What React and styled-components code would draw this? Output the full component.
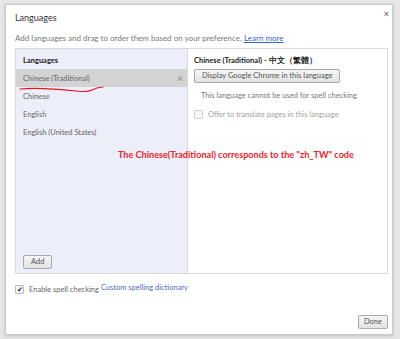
import React from "react";
import styled, { createGlobalStyle } from "styled-components";

const GlobalStyle = createGlobalStyle`
  body {
    margin: 0;
    background: #e6e6e6;
    font-family: Lato, "Open Sans", sans-serif;
  }
`;

const Screen = styled.div`
  width: 400px;
  height: 339px;
  padding: 4px 7px 4px 5px;
  box-sizing: border-box;
`;

const Dialog = styled.div`
  position: relative;
  height: 100%;
  background: #fff;
  border: 1px solid #c9c9c9;
  box-shadow: 0 1px 3px rgba(0, 0, 0, 0.18);
  box-sizing: border-box;
  padding: 7px 4px 5px 9px;
  display: flex;
  flex-direction: column;
`;

const Title = styled.div`
  font-size: 9px;
  color: #333;
  line-height: 12px;
  height: 12px;
`;

const Close = styled.div`
  position: absolute;
  top: 3px;
  right: 3px;
  font-size: 9px;
  color: #777;
  font-weight: bold;
`;

const Subtitle = styled.div`
  margin-top: 9px;
  font-size: 8px;
  color: #777;
  line-height: 10px;
  a {
    color: #3366cc;
    text-decoration: underline;
  }
`;

const Panels = styled.div`
  position: relative;
  margin-top: 5px;
  height: 226px;
  display: flex;
  border: 1px solid #dadada;
  box-sizing: border-box;
`;

const ListCol = styled.div`
  position: relative;
  width: 171px;
  background: #eceef9;
  border-right: 1px solid #dadada;
  display: flex;
  flex-direction: column;
`;

const Heading = styled.div`
  font-size: 7.5px;
  font-weight: bold;
  color: #222;
  padding: 7px ${(p) => (p.$flush ? "0" : "7px")} 0;
  height: 15px;
  box-sizing: border-box;
`;

const Row = styled.div`
  height: 18px;
  margin-top: ${(p) => (p.$first ? "5px" : "0")};
  display: flex;
  align-items: center;
  justify-content: space-between;
  padding: 0 4px 0 7px;
  font-size: 7.5px;
  color: #666;
  background: ${(p) => (p.$selected ? "#d3d3d3" : "transparent")};
`;

const RowX = styled.span`
  font-size: 10px;
  color: #888;
`;

const Spacer = styled.div`
  flex: 1;
`;

const SmallButton = styled.button`
  font-family: inherit;
  font-size: 7.5px;
  color: #555;
  background: linear-gradient(#f6f6f6, #e2e2e2);
  border: 1px solid #aaa;
  border-radius: 2px;
  height: 14px;
  padding: 0 ${(p) => p.$pad || "7px"};
  line-height: 12px;
  align-self: ${(p) => p.$align || "flex-start"};
  margin: ${(p) => p.$margin || "0"};
`;

const DetailCol = styled.div`
  flex: 1;
  display: flex;
  flex-direction: column;
  padding: 0 0 0 6px;
`;

const Note = styled.div`
  font-size: 7.5px;
  color: #777;
  margin: ${(p) => p.$margin || "0"};
  display: flex;
  align-items: center;
  gap: 5px;
  opacity: ${(p) => (p.$muted ? 0.7 : 1)};
`;

const Box = styled.span`
  width: 7px;
  height: 7px;
  border: 1px solid #bbb;
  border-radius: 1px;
  background: #f4f4f4;
  display: inline-flex;
  align-items: center;
  justify-content: center;
  font-size: 7px;
  color: #222;
  line-height: 1;
`;

const Annotation = styled.div`
  position: absolute;
  left: 102px;
  top: 100px;
  white-space: nowrap;
  font-size: 9.1px;
  font-weight: bold;
  color: #e8232a;
`;

const Scribble = styled.svg`
  position: absolute;
  left: 2px;
  top: 37px;
`;

const Footer = styled.div`
  margin-top: 11px;
  display: flex;
  align-items: center;
  font-size: 7.5px;
  color: #666;
  gap: 5px;
  a {
    color: #5566bb;
    text-decoration: none;
    margin-left: -3px;
    position: relative;
    top: -2px;
  }
`;

const Bottom = styled.div`
  flex: 1;
  display: flex;
  align-items: flex-end;
  justify-content: flex-end;
`;

export default function App() {
  return (
    <Screen>
      <GlobalStyle />
      <Dialog>
        <Close>×</Close>
        <Title>Languages</Title>
        <Subtitle>
          Add languages and drag to order them based on your preference. <a>Learn more</a>
        </Subtitle>
        <Panels>
          <ListCol>
            <Heading>Languages</Heading>
            <Row $first $selected>
              <span>Chinese (Traditional)</span>
              <RowX>×</RowX>
            </Row>
            <Row>Chinese</Row>
            <Row>English</Row>
            <Row>English (United States)</Row>
            <Spacer />
            <SmallButton $margin="0 0 4px 7px">Add</SmallButton>
            <Scribble width="86" height="8" viewBox="0 0 86 8">
              <path
                d="M2 3 C 20 1, 40 3, 58 5 C 66 6, 70 6, 74 4 C 78 2, 82 1, 85 1"
                fill="none"
                stroke="#e8141c"
                strokeWidth="1.2"
                strokeLinecap="round"
              />
            </Scribble>
          </ListCol>
          <DetailCol>
            <Heading $flush>Chinese (Traditional) - 中文（繁體）</Heading>
            <SmallButton $margin="5px 0 0 0">Display Google Chrome in this language</SmallButton>
            <Note $margin="8px 0 0 7px">This language cannot be used for spell checking</Note>
            <Note $muted $margin="10px 0 0 0">
              <Box />
              Offer to translate pages in this language
            </Note>
          </DetailCol>
          <Annotation>The Chinese(Traditional) corresponds to the "zh_TW" code</Annotation>
        </Panels>
        <Footer>
          <Box>✔</Box>
          Enable spell checking
          <a>Custom spelling dictionary</a>
        </Footer>
        <Bottom>
          <SmallButton $align="flex-end" $pad="5px">Done</SmallButton>
        </Bottom>
      </Dialog>
    </Screen>
  );
}
